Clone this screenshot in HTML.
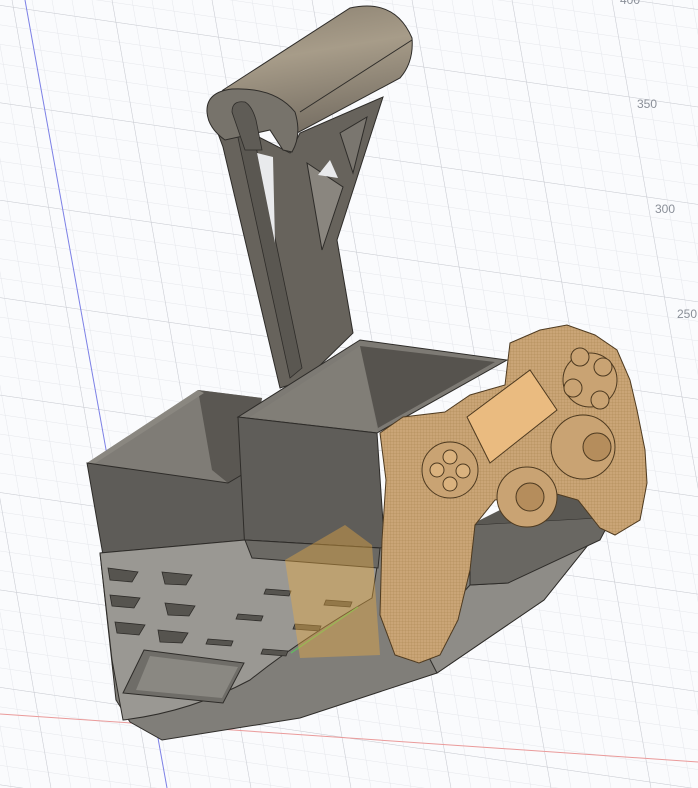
<!DOCTYPE html>
<html><head><meta charset="utf-8"><style>
html,body{margin:0;padding:0;background:#fafbfd;overflow:hidden}
svg{display:block}
</style></head><body>
<svg width="698" height="788" viewBox="0 0 698 788" xmlns="http://www.w3.org/2000/svg">
<defs>
<pattern id="g" width="20" height="20" patternUnits="userSpaceOnUse" patternTransform="translate(13,7) skewX(10) skewY(8.5)">
<path d="M0 0H20M0 0V20" stroke="#e4e6eb" stroke-width="1" fill="none"/>
</pattern>
<pattern id="G" width="100" height="100" patternUnits="userSpaceOnUse" patternTransform="translate(13,7) skewX(10) skewY(8.5)">
<path d="M0 0H100M0 0V100" stroke="#c8cad0" stroke-width="1" fill="none"/>
</pattern>
<pattern id="mesh" width="3" height="3" patternUnits="userSpaceOnUse">
<rect width="3" height="3" fill="#caa577"/><path d="M0 0H3M0 0V3" stroke="#a9854f" stroke-width="0.5"/>
</pattern>
<linearGradient id="cyl" x1="0" y1="0" x2="0.25" y2="1"><stop offset="0" stop-color="#8a8070"/><stop offset="0.45" stop-color="#a79c89"/><stop offset="1" stop-color="#7a7266"/></linearGradient>
</defs>
<rect width="698" height="788" fill="#fafbfd"/>
<rect width="698" height="788" fill="url(#g)"/>
<rect width="698" height="788" fill="url(#G)"/>
<line x1="25" y1="0" x2="167" y2="788" stroke="#7c80e6" stroke-width="1"/>
<line x1="0" y1="714" x2="698" y2="762" stroke="#ea9a9a" stroke-width="1"/>
<g font-family="Liberation Sans, sans-serif" font-size="12" fill="#8a8f98">
<text x="637" y="108">350</text><text x="655" y="213">300</text><text x="677" y="318">250</text><text x="620" y="4">400</text>
</g>
<path d="M210 112 L223 147 L280 388 L305 380 L353 333 L337 240 L383 97 L300 133 L290 153 Z" fill="#67635c" stroke="#2e2c29" stroke-width="1"/>
<path d="M232 110 L248 108 L302 368 L290 378 Z" fill="#5a5751" stroke="#2e2c29" stroke-width="0.8"/>
<path d="M257 153 L273 157 L275 243 Z" fill="#e9eaec"/>
<path d="M307 163 L343 187 L322 250 Z" fill="#8a867f" stroke="#2e2c29"/>
<path d="M340 133 L367 117 L353 173 Z" fill="#7a766f" stroke="#2e2c29"/>
<path d="M318 175 L330 160 L338 178 Z" fill="#e9eaec"/>
<path d="M223 90 L350 8 Q395 -2 412 38 Q414 62 400 78 L297 133 L260 100 Z" fill="url(#cyl)" stroke="#2e2c29" stroke-width="1"/>
<path d="M300 112 L412 40" stroke="#2e2c29" fill="none"/>
<path d="M207 112 Q206 92 232 89 Q275 87 295 112 Q302 135 292 152 L283 150 L270 130 L225 140 Q208 128 207 112 Z" fill="#77736b" stroke="#2e2c29"/>
<path d="M232 112 Q232 100 245 102 Q252 106 256 120 L262 150 L245 150 Z" fill="#5f5c56" stroke="#2e2c29" stroke-width="0.8"/>
<path d="M87 463 L198 390 L262 398 L250 470 L228 483 Z" fill="#7f7c76"/>
<path d="M198 390 L212 470 L228 483 L250 470 L262 398 Z" fill="#5a5752"/>
<path d="M87 463 L198 390 L204 393 L94 464 Z" fill="#8a8780"/>
<path d="M87 463 L228 483 L250 470 L262 525 L262 555 L103 555 Z" fill="#5e5c58" stroke="#2e2c29"/>
<path d="M238 417 L360 340 L507 360 L377 433 Z" fill="#7d7a74" stroke="#2e2c29"/>
<path d="M250 417 L360 346 L378 432 Z" fill="#817e77"/>
<path d="M360 346 L495 362 L378 428 Z" fill="#56534e"/>
<path d="M238 417 L377 433 L385 552 L245 552 Z" fill="#5f5d59" stroke="#2e2c29"/>
<path d="M100 553 L245 540 L380 548 L470 525 L608 520 L544 600 L437 673 L300 718 L162 740 L130 722 L116 700 Z" fill="#807e79" stroke="#2e2c29"/>
<path d="M470 585 L508 583 L608 520 L544 600 L437 673 L420 640 Z" fill="#8e8c87" stroke="#2e2c29"/>
<path d="M100 553 L245 540 L380 548 L372 598 Q300 640 250 680 Q190 712 123 720 L112 660 Z" fill="#9a9893" stroke="#2e2c29"/>
<path d="M245 540 L380 548 L378 568 L252 558 Z" fill="#6b6964" stroke="#2e2c29"/>
<path d="M358 607 L291 653" stroke="#5fbf5f" stroke-width="1.2"/>
<path d="M470 525 L612 517 L600 540 L508 583 L470 585 Z" fill="#696762" stroke="#2e2c29"/>
<path d="M540 490 L600 484 L612 517 L470 525 Z" fill="#5a5853"/>
<path d="M144 650 L244 663 L223 703 L123 693 Z" fill="#6f6d68" stroke="#2e2c29"/>
<path d="M150 656 L238 667 L222 698 L136 690 Z" fill="#8a8882"/>
<g fill="#56544f" stroke="#2e2c29" stroke-width="0.8">
<path d="M108 568 L138 572 L132 582 L110 580Z"/><path d="M162 572 L192 575 L186 585 L165 584Z"/>
<path d="M110 595 L140 598 L134 608 L112 606Z"/><path d="M165 603 L195 606 L189 616 L168 615Z"/>
<path d="M115 622 L145 625 L139 635 L117 633Z"/><path d="M158 630 L188 633 L182 643 L160 642Z"/>
<path d="M266 589 L291 591 L289 596 L264 594Z"/><path d="M238 614 L263 616 L261 621 L236 619Z"/>
<path d="M208 639 L233 641 L231 646 L206 644Z"/><path d="M263 649 L288 651 L286 656 L261 654Z"/>
<path d="M326 600 L352 602 L350 607 L324 605Z"/><path d="M295 624 L321 626 L319 631 L293 629Z"/>
</g>
<path d="M285 560 L345 525 L372 545 L380 655 L300 658 Z" fill="#f0b040" opacity="0.4"/>
<path d="M380 433 L403 417 L445 412 L470 395 L505 385 L510 343 L540 330 L567 325 L595 335 L617 350 L630 380 L637 410 L645 450 L647 483 L640 520 L615 535 L600 528 L578 500 L550 492 L495 500 L475 525 L470 570 L458 620 L440 655 L419 663 L395 655 L380 615 L382 540 L386 480 Z" fill="url(#mesh)" stroke="#4e3a20" stroke-width="1"/>
<path d="M467 417 L530 370 L557 410 L490 463 Z" fill="#eabb80" stroke="#4e3a20"/>
<g fill="#c9a373" stroke="#4e3a20">
<circle cx="590" cy="380" r="27"/>
<circle cx="580" cy="357" r="9"/><circle cx="603" cy="367" r="9"/><circle cx="573" cy="388" r="9"/><circle cx="600" cy="400" r="9"/>
<circle cx="450" cy="470" r="28"/>
<circle cx="583" cy="447" r="32"/><circle cx="597" cy="447" r="14" fill="#b58d5c"/>
<circle cx="527" cy="497" r="30"/><circle cx="530" cy="497" r="14" fill="#b58d5c"/>
</g>
<g fill="#dab27e" stroke="#4e3a20"><circle cx="450" cy="457" r="7"/><circle cx="437" cy="470" r="7"/><circle cx="463" cy="471" r="7"/><circle cx="450" cy="484" r="7"/></g>
</svg>
</body></html>
